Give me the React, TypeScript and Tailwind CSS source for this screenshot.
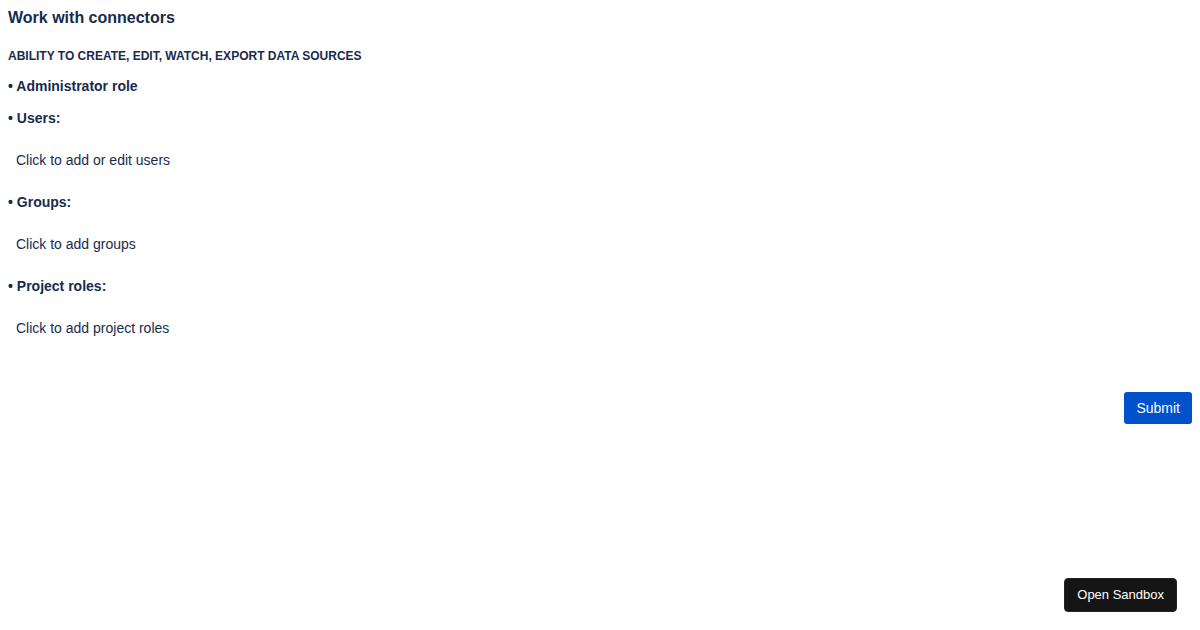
import React from 'react';

interface InlineFieldProps {
  label: string;
  placeholder: string;
}

function InlineField({ label, placeholder }: InlineFieldProps) {
  return (
    <section>
      <h3 className="text-sm font-semibold leading-5">• {label}:</h3>
      <div className="py-3">
        <button
          type="button"
          aria-label={`${label}: ${placeholder}`}
          className="block w-full rounded-[3px] p-2 text-left text-sm leading-6 hover:bg-[#ebecf0]"
        >
          {placeholder}
        </button>
      </div>
    </section>
  );
}

const fields = [
  { label: 'Users', placeholder: 'Click to add or edit users' },
  { label: 'Groups', placeholder: 'Click to add groups' },
  { label: 'Project roles', placeholder: 'Click to add project roles' },
];

export default function App() {
  return (
    <div className="min-h-screen bg-white font-['Helvetica_Neue','Nimbus_Sans','Liberation_Sans',Arial,sans-serif] text-[#172b4d]">
      <main className="p-2">
        <h1 className="text-base font-semibold leading-5">Work with connectors</h1>
        <h2 className="mt-5 text-xs font-semibold uppercase leading-4">
          Ability to create, edit, watch, export data sources
        </h2>
        <h3 className="my-3 text-sm font-semibold leading-5">• Administrator role</h3>

        {fields.map((field) => (
          <InlineField key={field.label} label={field.label} placeholder={field.placeholder} />
        ))}

        <div className="mt-8 flex justify-end">
          <button
            type="submit"
            className="h-8 rounded-[3px] bg-[#0052cc] px-3 text-sm text-white hover:bg-[#0065ff]"
          >
            Submit
          </button>
        </div>
      </main>

      {/* Floating sandbox link */}
      <a
        href="#sandbox"
        className="fixed bottom-[18px] right-[23px] flex h-[34px] items-center rounded border border-[#252525] bg-[#151515] px-3 text-[13px] leading-4 text-white"
      >
        Open Sandbox
      </a>
    </div>
  );
}
